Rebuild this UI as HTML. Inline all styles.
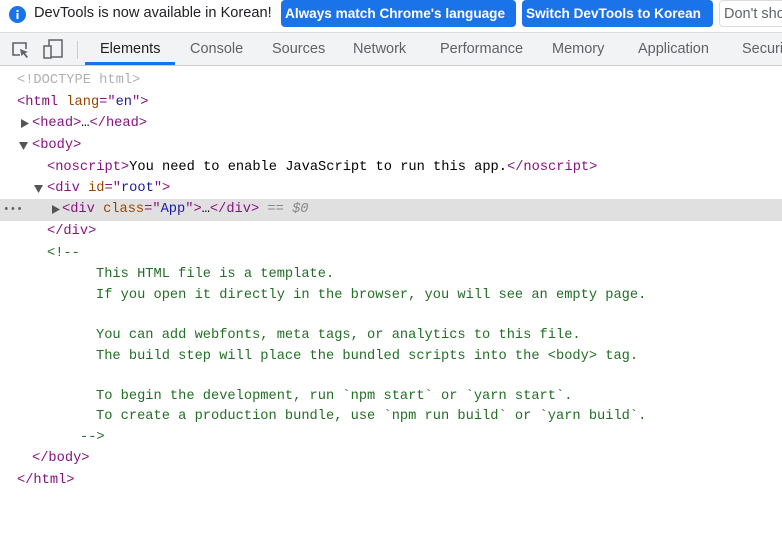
<!DOCTYPE html>
<html><head><style>
body{margin:0;width:782px;height:553px;overflow:hidden;background:#fff;font-family:"Liberation Sans",sans-serif;position:relative}
.info{position:absolute;top:0;left:0;width:782px;height:32px;border-bottom:1px solid #dadce0;white-space:nowrap}
.btn{position:absolute;top:0;height:27px;line-height:27px;border-radius:4px;background:#1a73e8;color:#fff;font-weight:bold;font-size:13.6px;padding:0 4px;box-sizing:border-box;overflow:hidden;white-space:nowrap}
.tb{position:absolute;top:33px;left:0;width:782px;height:32px;background:#f1f3f4;border-bottom:1px solid #cbcdd1}
.tab{position:absolute;top:8px;font-size:14.5px;color:#5f6368}
.code{position:absolute;top:0;left:0;width:782px;font-family:"Liberation Mono",monospace;font-size:13.7px}
.l{position:absolute;left:0;width:782px;height:21px;line-height:21px;white-space:pre;box-sizing:border-box}
.t{color:#881280}.a{color:#994500}.v{color:#1a1aa6}.c{color:#236e25}.g{color:#b0b0b0}
.tri{position:absolute;top:6px}
</style></head><body>
<div class="info">
<svg style="position:absolute;left:9px;top:6px" width="17" height="17"><circle cx="8.5" cy="8.5" r="8.5" fill="#1a73e8"/><rect x="7.5" y="7" width="2" height="6" fill="#fff"/><rect x="7.5" y="4" width="2" height="2" fill="#fff"/></svg>
<span style="position:absolute;left:34px;top:5px;font-size:14.6px;color:#202124">DevTools is now available in Korean!</span>
<div class="btn" style="left:281px;width:235px">Always match Chrome's language</div>
<div class="btn" style="left:522px;width:191px">Switch DevTools to Korean</div>
<div class="btn" style="left:719px;width:90px;background:#fff;color:#5f6368;font-weight:normal;border:1px solid #dadce0;font-size:14.5px">Don't show</div>
</div>
<div class="tb">
<svg style="position:absolute;left:11px;top:8px" width="20" height="18"><path d="M9 14H2V2h13v6" fill="none" stroke="#5f6368" stroke-width="1.6"/><path d="M9 8l8 3-3 1 3 4-1.5 1-3-4-2 2z" fill="#5f6368"/></svg>
<svg style="position:absolute;left:43px;top:6px" width="22" height="20"><rect x="6" y="1" width="13" height="17" fill="none" stroke="#5f6368" stroke-width="1.5"/><rect x="1" y="7" width="7" height="12" fill="#f1f3f4" stroke="#5f6368" stroke-width="1.5"/></svg>
<div style="position:absolute;left:77px;top:8px;width:1px;height:18px;background:#ccc"></div>
<span class="tab" style="left:100px;color:#202124">Elements</span>
<div style="position:absolute;left:85px;top:29px;width:90px;height:3px;background:#1a73e8"></div>
<span class="tab" style="left:190px">Console</span>
<span class="tab" style="left:272px">Sources</span>
<span class="tab" style="left:353px">Network</span>
<span class="tab" style="left:440px">Performance</span>
<span class="tab" style="left:552px">Memory</span>
<span class="tab" style="left:638px">Application</span>
<span class="tab" style="left:742px">Security</span>
</div>
<div class="code">
<div class="l" style="top:70px;padding-left:17px"><span class="g">&lt;!DOCTYPE html&gt;</span></div>
<div class="l" style="top:92px;padding-left:17px"><span class="t">&lt;html </span><span class="a">lang</span><span class="t">="</span><span class="v">en</span><span class="t">"&gt;</span></div>
<div class="l" style="top:113px;padding-left:32px"><svg class="tri" style="left:21px" width="8" height="9"><path d="M0 0L8 4.5L0 9z" fill="#555"/></svg><span class="t">&lt;head&gt;</span>…<span class="t">&lt;/head&gt;</span></div>
<div class="l" style="top:135px;padding-left:32px"><svg class="tri" style="left:19px;top:7px" width="9" height="8"><path d="M0 0H9L4.5 8z" fill="#555"/></svg><span class="t">&lt;body&gt;</span></div>
<div class="l" style="top:157px;padding-left:47px"><span class="t">&lt;noscript&gt;</span>You need to enable JavaScript to run this app.<span class="t">&lt;/noscript&gt;</span></div>
<div class="l" style="top:178px;padding-left:47px"><svg class="tri" style="left:34px;top:7px" width="9" height="8"><path d="M0 0H9L4.5 8z" fill="#555"/></svg><span class="t">&lt;div </span><span class="a">id</span><span class="t">="</span><span class="v">root</span><span class="t">"&gt;</span></div>
<div class="l" style="top:199px;height:22px;line-height:22px;padding-left:62px;background:#e0e0e0"><span style="position:absolute;left:3px;color:#666;font-size:11px">•••</span><svg class="tri" style="left:52px" width="8" height="9"><path d="M0 0L8 4.5L0 9z" fill="#555"/></svg><span class="t">&lt;div </span><span class="a">class</span><span class="t">="</span><span class="v">App</span><span class="t">"&gt;</span>…<span class="t">&lt;/div&gt;</span><span style="color:#888"> == <i>$0</i></span></div>
<div class="l" style="top:221px;padding-left:47px"><span class="t">&lt;/div&gt;</span></div>
<div class="l c" style="top:243px;padding-left:47px">&lt;!--</div>
<div class="l c" style="top:264px;padding-left:96px">This HTML file is a template.</div>
<div class="l c" style="top:285px;padding-left:96px">If you open it directly in the browser, you will see an empty page.</div>
<div class="l c" style="top:325px;padding-left:96px">You can add webfonts, meta tags, or analytics to this file.</div>
<div class="l c" style="top:346px;padding-left:96px">The build step will place the bundled scripts into the &lt;body&gt; tag.</div>
<div class="l c" style="top:386px;padding-left:96px">To begin the development, run `npm start` or `yarn start`.</div>
<div class="l c" style="top:406px;padding-left:96px">To create a production bundle, use `npm run build` or `yarn build`.</div>
<div class="l c" style="top:427px;padding-left:80px">--&gt;</div>
<div class="l" style="top:448px;padding-left:32px"><span class="t">&lt;/body&gt;</span></div>
<div class="l" style="top:470px;padding-left:17px"><span class="t">&lt;/html&gt;</span></div>
</div>
</body></html>
